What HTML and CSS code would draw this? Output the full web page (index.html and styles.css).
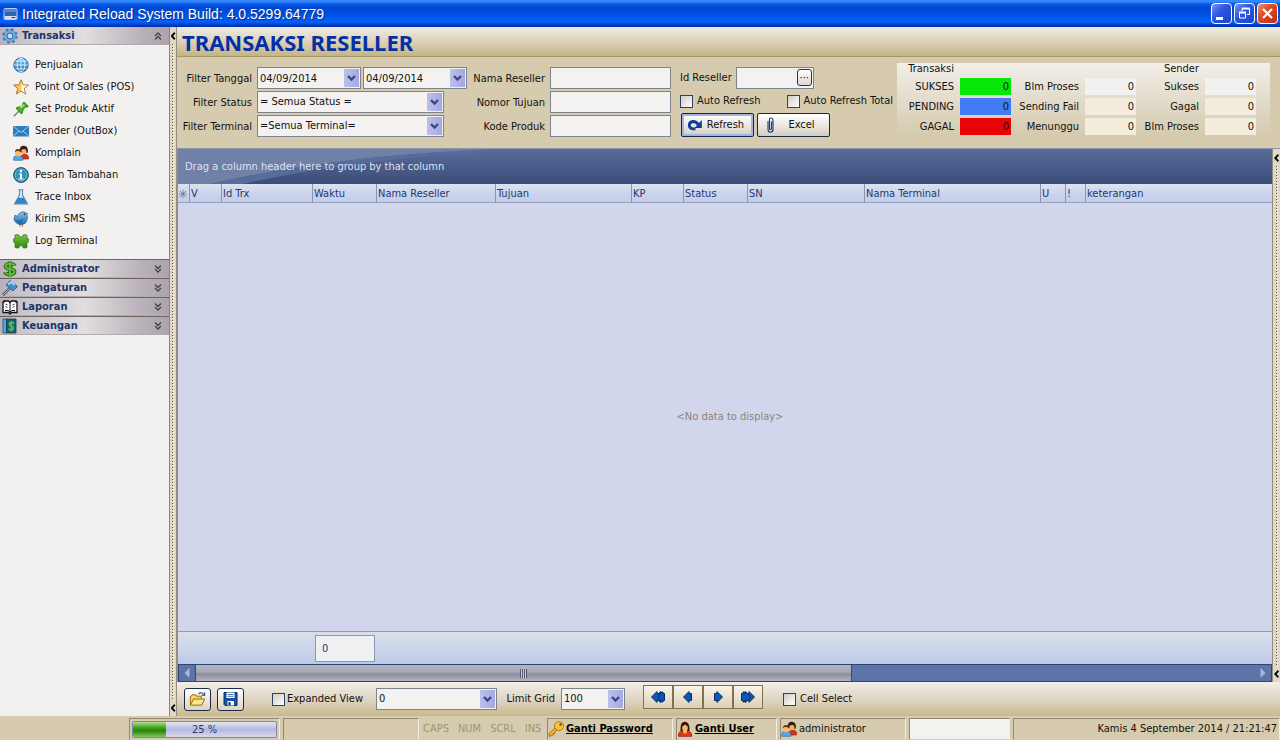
FILE: index.html
```html
<!DOCTYPE html>
<html lang="id">
<head>
<meta charset="utf-8">
<title>Integrated Reload System</title>
<link rel="stylesheet" href="styles.css">
</head>
<body>
<svg class="defs" aria-hidden="true">
  <defs>
    <linearGradient id="blue" x1="0" y1="0" x2="0" y2="1"><stop offset="0" stop-color="#8cc8f0"/><stop offset="1" stop-color="#1668a8"/></linearGradient>
    <linearGradient id="green" x1="0" y1="0" x2="0" y2="1"><stop offset="0" stop-color="#7cc83c"/><stop offset="1" stop-color="#2e8418"/></linearGradient>
    <linearGradient id="gold" x1="0" y1="0" x2="1" y2="0"><stop offset="0" stop-color="#f6b62c"/><stop offset="0.5" stop-color="#fbd050"/><stop offset="0.6" stop-color="#fffbe8"/><stop offset="1" stop-color="#fff"/></linearGradient>
    <symbol id="drop" viewBox="0 0 15 17"><path d="M4 6.500l3.500 3.500 3.500-3.500" fill="none" stroke="#3c4880" stroke-width="2.400"/></symbol>
    <symbol id="chev" viewBox="0 0 8 8"><path d="M1 .5l3 3 3-3M1 4l3 3 3-3" fill="none" stroke="#444" stroke-width="1.300"/></symbol>
    <symbol id="people" viewBox="0 0 16 16">
      <path d="M8.500 14V10.500q2.500-2 5-1 2 .6 2 2.500v2z" fill="#dc3010" stroke="#8c1c08" stroke-width=".6"/>
      <circle cx="10.800" cy="5.500" r="3.600" fill="#f0b060"/><path d="M6.800 6Q6.500.5 11 .8 15.500 1 14.800 7.500L13.400 8Q14 4 11 4 8.500 4.200 8 6z" fill="#3c1c0c"/>
      <path d="M.7 15.300v-2.400Q1 10.500 5 10.500q4.300 0 4.800 2.400v2.400z" fill="#5ca8e4" stroke="#1c5c98" stroke-width=".6"/>
      <circle cx="5.300" cy="8" r="3.200" fill="#f4bc6c"/><path d="M2 7.500Q1.800 3.800 5.300 4q3.600.1 3.400 3.500Q6 6.200 5 5.800 3 6 2 7.500z" fill="#6c300c"/>
    </symbol>
  </defs>
</svg>

<header class="titlebar">
  <svg class="app-icon" viewBox="0 0 14 12"><rect x=".5" y=".5" width="13" height="11" rx="1" fill="#2c64b4" stroke="#b8d0f4"/><path d="M1 8h12v3H1z" fill="#d8e0f0"/><path d="M1 1h12v3H1z" fill="#5484cc"/><path d="M8 9.500h4" stroke="#345"/></svg>
  <h1 class="app-name">Integrated Reload System Build: 4.0.5299.64779</h1>
  <div class="window-buttons">
    <button class="win-btn" aria-label="Minimize"><svg viewBox="0 0 19 19"><path d="M4 13h7v3H4z" fill="#fff"/></svg></button>
    <button class="win-btn" aria-label="Restore"><svg viewBox="0 0 19 19" fill="none" stroke="#fff"><path d="M7 7V4.500h7.500v6H12"/><path d="M7 4.500h7.500" stroke-width="2"/><path d="M4.500 8.500h6v5.500h-6z"/><path d="M4 8.500h7" stroke-width="2"/></svg></button>
    <button class="win-btn close" aria-label="Close"><svg viewBox="0 0 19 19"><path d="M5 5l9 9M14 5l-9 9" stroke="#fff" stroke-width="2.200"/></svg></button>
  </div>
</header>

<div class="workspace">
  <nav class="sidebar">
    <button class="nav-head">
      <svg class="icon" viewBox="0 0 16 16"><circle cx="8" cy="8" r="6.200" fill="#5c9cd8" stroke="#3c7cb8" stroke-width="3" stroke-dasharray="2.600 2.270"/><circle cx="8" cy="8" r="5.600" fill="#70ace0"/><circle cx="8" cy="8" r="3" fill="#c8d8ec" stroke="#2c64a0"/></svg>
      <span>Transaksi</span><svg class="chev up"><use href="#chev"/></svg>
    </button>
    <ul class="nav-list">
      <li><a class="nav-item" href="#"><svg class="icon" viewBox="0 0 16 16"><circle cx="8" cy="8" r="7.200" fill="url(#blue)" stroke="#2468a4"/><path d="M8 1v14M1 8h14M2.500 4.200h11M2.500 11.800h11" stroke="#d4ecfc" fill="none"/><ellipse cx="8" cy="8" rx="3.800" ry="7" fill="none" stroke="#d4ecfc"/></svg>Penjualan</a></li>
      <li><a class="nav-item" href="#"><svg class="icon" viewBox="0 0 16 16"><path d="M8 .8l2 5 5.400.3-4.200 3.500 1.500 5.400L8 12l-4.700 3 1.500-5.400L.6 6.100 6 5.800z" fill="url(#gold)" stroke="#a4702c" stroke-width=".9"/></svg>Point Of Sales (POS)</a></li>
      <li><a class="nav-item" href="#"><svg class="icon" viewBox="0 0 16 16"><path d="M.8 15.200L6 10" stroke="#78888c" stroke-width="1.600"/><path d="M3 7.200q2-1.800 4.200-1L10 3.800Q9.500 2 11 1l4.300 4.200q-1.300 1.300-3 .9L9.800 9q.5 2.500-1.400 4z" fill="#48b820" stroke="#207808" stroke-width=".9"/><path d="M7.500 7L11 3.800" stroke="#b4f080" stroke-width="1.300"/></svg>Set Produk Aktif</a></li>
      <li><a class="nav-item" href="#"><svg class="icon" viewBox="0 0 16 16"><path d="M0 3h16v10.500H0z" fill="#2c7cc0"/><path d="M.5 3.500L8 9.500l7.500-6M.5 13L6 8M15.500 13L10 8" fill="none" stroke="#a0d0f0" stroke-width="1"/></svg>Sender (OutBox)</a></li>
      <li><a class="nav-item" href="#"><svg class="icon"><use href="#people"/></svg>Komplain</a></li>
      <li><a class="nav-item" href="#"><svg class="icon" viewBox="0 0 16 16"><circle cx="8" cy="8" r="7.400" fill="#20789c" stroke="#105474"/><circle cx="8" cy="8" r="6" fill="#3094bc" stroke="#90ccdc" stroke-width=".8"/><path d="M6 6.500h3v5h1.500v1h-5v-1H7v-4H6zM7 3h2v2.300H7z" fill="#fff"/></svg>Pesan Tambahan</a></li>
      <li><a class="nav-item" href="#"><svg class="icon" viewBox="0 0 16 16"><path d="M5.500.8h5M6.500 1v5L1.500 15h13L9.500 6V1" fill="#dcecf8" stroke="#5488b4" stroke-width="1.100"/><path d="M5.200 8.800h5.600l3.200 6H2z" fill="#2c84cc"/></svg>Trace Inbox</a></li>
      <li><a class="nav-item" href="#"><svg class="icon" viewBox="0 0 16 16"><path d="M7 13v3M9.500 13v3" stroke="#e08c20"/><path d="M13.500 2l2.400.6-2.200 1.300z" fill="#e08c20"/><path d="M2 4l2.500 1.500Q6 1 10 .7q4 0 4.300 4 .3 5-1.800 7.300Q9 15 5 13 1.500 11 1 8.500z" fill="url(#blue)" stroke="#24609c" stroke-width=".7"/><path d="M3 9q4 2 7-2 0 4-3.500 5Q4 12 3 9z" fill="#2464b0"/><circle cx="11.500" cy="3.400" r=".8" fill="#123"/></svg>Kirim SMS</a></li>
      <li><a class="nav-item" href="#"><svg class="icon" viewBox="0 0 16 16"><path d="M2 2q2-1 4 0 0 2 2 2t2-2q2-1 4 0v3.500q2-.5 2 1.800T14 9.500V14.500q-2 1-4 .3Q10 12.500 8 12.500t-2 2.300q-2 .7-4-.3V9.500Q0 9.800 0 7.500T2 5.500z" fill="url(#green)" stroke="#347c18" stroke-width=".7"/></svg>Log Terminal</a></li>
    </ul>
    <button class="nav-head">
      <svg class="icon" viewBox="0 0 16 16"><path d="M12.500 5Q12 2.800 8 2.800T3.500 5.300Q3.500 7.300 8 8t4.500 2.800Q12.500 13.200 8 13.200T3.300 11M8 .5v15" fill="none" stroke="#206818" stroke-width="3.800"/><path d="M12.500 5Q12 2.800 8 2.800T3.500 5.300Q3.500 7.300 8 8t4.500 2.800Q12.500 13.200 8 13.200T3.300 11M8 1v14" fill="none" stroke="#60b838" stroke-width="2"/></svg>
      <span>Administrator</span><svg class="chev"><use href="#chev"/></svg>
    </button>
    <button class="nav-head">
      <svg class="icon" viewBox="0 0 16 16"><path d="M1 15L8 8" stroke="#585c68" stroke-width="2.600"/><path d="M1.500 14.500L8 8" stroke="#b8c0cc"/><path d="M4 5l4-4.500 7.500 6L11 11z" fill="#3c90d0" stroke="#1c588c" stroke-width=".8"/><path d="M6 4.500L9 2l3.500 3" fill="none" stroke="#c8e8fc" stroke-width="1.500"/></svg>
      <span>Pengaturan</span><svg class="chev"><use href="#chev"/></svg>
    </button>
    <button class="nav-head">
      <svg class="icon" viewBox="0 0 16 16"><path d="M1 3h1V2h4.500L8 3.500 9.500 2H14v1h1v10.500H9.500L8 15l-1.500-1.500H1z" fill="#fff" stroke="#111" stroke-width="1.300"/><path d="M8 3.500V14M3 11.500h3L8 13l2-1.500h3" stroke="#111" fill="none"/><path d="M3.500 5l2 1M3.500 7.500l2 1M12.500 5l-2 1M12.500 7.500l-2 1" stroke="#444"/></svg>
      <span>Laporan</span><svg class="chev"><use href="#chev"/></svg>
    </button>
    <button class="nav-head">
      <svg class="icon" viewBox="0 0 16 16"><path d="M1 1h3.500v14H1z" fill="#58a8d4" stroke="#185074" stroke-width=".8"/><path d="M4.500 1H14v14H4.500z" fill="#186078" stroke="#0c3c50" stroke-width=".8"/><path d="M12 5.500Q11 4 9 4.500T7.300 6.500Q8 8 9.500 8t2 2.200Q11 12 9 12t-2.300-1.500M9.300 3v10.500" fill="none" stroke="#50c840" stroke-width="1.500"/></svg>
      <span>Keuangan</span><svg class="chev"><use href="#chev"/></svg>
    </button>
  </nav>
  <div class="splitter"><span class="collapse"></span><span class="dots"></span><span class="collapse"></span></div>

  <main class="main">
    <h2 class="page-title">TRANSAKSI RESELLER</h2>

    <form class="filters">
      <div class="fields fields-a">
        <label for="date-from">Filter Tanggal</label>
        <div class="dates">
          <span class="combo"><input id="date-from" type="text" value="04/09/2014"><svg class="arrow"><use href="#drop"/></svg></span>
          <span class="combo"><input aria-label="Sampai tanggal" type="text" value="04/09/2014"><svg class="arrow"><use href="#drop"/></svg></span>
        </div>
        <label for="status">Filter Status</label>
        <span class="combo wide"><select id="status"><option>= Semua Status =</option></select><svg class="arrow"><use href="#drop"/></svg></span>
        <label for="terminal">Filter Terminal</label>
        <span class="combo wide"><select id="terminal"><option>=Semua Terminal=</option></select><svg class="arrow"><use href="#drop"/></svg></span>
      </div>
      <div class="fields fields-b">
        <label for="nama">Nama Reseller</label><input id="nama" type="text">
        <label for="tujuan">Nomor Tujuan</label><input id="tujuan" type="text">
        <label for="kode">Kode Produk</label><input id="kode" type="text">
      </div>
      <div class="actions">
        <div class="id-row"><label for="idres">Id Reseller</label><span class="lookup"><input id="idres" type="text"><button type="button" class="more" aria-label="Cari">···</button></span></div>
        <div class="checks"><label class="check"><input type="checkbox">Auto Refresh</label><label class="check"><input type="checkbox">Auto Refresh Total</label></div>
        <div class="buttons">
          <button type="button" class="btn primary"><svg viewBox="0 0 16 16"><path d="M8.500 11.800H6Q2.300 11.500 2.300 8.200T6 4.500q3.500 0 5 3" fill="none" stroke="#0c3c94" stroke-width="2.800"/><path d="M14.800 3v8H7.500z" fill="#0c3c94"/></svg><span>Refresh</span></button>
          <button type="button" class="btn"><svg viewBox="0 0 16 16"><path d="M5 4v8.500Q5 15.200 7.500 15.200T10 12.500V3Q10 1 8.200 1T6.500 3v8.500q0 1.200 1 1.200t1-1.200V4.500" fill="none" stroke="#1c3478" stroke-width="1.100"/></svg><span>Excel</span></button>
        </div>
      </div>
      <div class="totals">
        <span class="lab">Transaksi</span><span></span><span></span><span></span><span class="lab">Sender</span><span></span>
        <span class="lab">SUKSES</span><output class="val green">0</output><span class="lab">Blm Proses</span><output class="val white">0</output><span class="lab">Sukses</span><output class="val white">0</output>
        <span class="lab">PENDING</span><output class="val blue">0</output><span class="lab">Sending Fail</span><output class="val">0</output><span class="lab">Gagal</span><output class="val">0</output>
        <span class="lab">GAGAL</span><output class="val red">0</output><span class="lab">Menunggu</span><output class="val">0</output><span class="lab">Blm Proses</span><output class="val">0</output>
      </div>
    </form>

    <div class="content">
      <section class="grid">
        <div class="group-bar">
          <svg class="swoosh" viewBox="0 0 1094 35" preserveAspectRatio="none"><path d="M0 0H320Q160 6 32 35H0z" fill="#7080a6"/><path d="M320 0Q160 6 32 35H65Q180 8 360 0z" fill="#586c9c"/></svg>
          <span class="group-hint">Drag a column header here to group by that column</span>
        </div>
        <div class="table-wrap">
          <table class="data">
            <colgroup><col class="w12"><col class="w32"><col class="w91"><col class="w64"><col class="w119"><col class="w136"><col class="w52"><col class="w64"><col class="w117"><col class="w176"><col class="w25"><col class="w20"><col></colgroup>
            <thead><tr><th class="star"><svg viewBox="0 0 8 8"><path d="M4 0v8M0 4h8M1 1l6 6M7 1L1 7" stroke="#505870" stroke-width=".9" stroke-dasharray="1.200 .6"/></svg></th><th>V</th><th>Id Trx</th><th>Waktu</th><th>Nama Reseller</th><th>Tujuan</th><th>KP</th><th>Status</th><th>SN</th><th>Nama Terminal</th><th>U</th><th>!</th><th>keterangan</th></tr></thead>
            <tbody><tr><td colspan="13">&lt;No data to display&gt;</td></tr></tbody>
            <tfoot><tr><td colspan="3"></td><td class="sum"><div class="sum-box">0</div></td><td colspan="9"></td></tr></tfoot>
          </table>
        </div>
        <div class="scrollbar">
          <button class="sb-btn" aria-label="Geser kiri"><svg viewBox="0 0 6 10"><path d="M5.500 0v10L.5 5z" fill="#a8b8dc"/></svg></button>
          <div class="sb-track"><div class="sb-thumb"><span class="grip"></span></div></div>
          <button class="sb-btn right" aria-label="Geser kanan"><svg viewBox="0 0 6 10"><path d="M.5 0v10l5-5z" fill="#a8b8dc"/></svg></button>
        </div>
      </section>
      <div class="splitter"><span class="collapse"></span><span class="dots"></span><span class="collapse"></span></div>
    </div>

    <div class="toolbar">
      <div class="files">
        <button class="tool" aria-label="Buka"><svg viewBox="0 0 18 16"><path d="M1.500 14V5h1l1-1.500h3.500L8 5h5v3" fill="#f4d870" stroke="#94640c"/><path d="M1.500 14.500L4.800 8H16.500l-3 6.500z" fill="#fce880" stroke="#94640c"/><path d="M10 2.500q3-2.500 5.500.5M16.500 1v3h-3" fill="none" stroke="#1c3478" stroke-width="1.100"/></svg></button>
        <button class="tool" aria-label="Simpan"><svg viewBox="0 0 16 16"><path d="M1.500 1.500h13v13h-12l-1-1z" fill="#1454a8" stroke="#0c2c6c"/><path d="M4 1.500h8v5.500H4zM5 10h6.500v4.500H5z" fill="#fff"/><path d="M5 3.500h6M5 5.300h6" stroke="#1454a8" stroke-width=".8"/><path d="M6 11h2v3.500H6z" fill="#0c2c6c"/></svg></button>
      </div>
      <label class="check tight"><input type="checkbox">Expanded View</label>
      <span class="combo view"><select aria-label="View"><option>0</option></select><svg class="arrow"><use href="#drop"/></svg></span>
      <label class="limit" for="limit">Limit Grid</label>
      <span class="combo count"><select id="limit"><option>100</option></select><svg class="arrow"><use href="#drop"/></svg></span>
      <div class="pager">
        <button class="page" aria-label="Pertama"><svg viewBox="0 0 16 16" fill="#0858b4" stroke="#0c2c6c"><path d="M10.500 2.500v2h1v-1.500h1.500v1.500h1.500v7H13V13h-1.500v-1.500h-1v2L5 8z"/><path d="M7 2.500L1.500 8 7 13.500v-2h2v-7H7z"/></svg></button>
        <button class="page" aria-label="Sebelumnya"><svg viewBox="0 0 16 16" fill="#0858b4" stroke="#0c2c6c"><path d="M9 2.500v2h2.500v7H9v2L3.500 8z"/></svg></button>
        <button class="page" aria-label="Berikutnya"><svg viewBox="0 0 16 16" fill="#0858b4" stroke="#0c2c6c"><path d="M7 2.500v2H4.500v7H7v2L12.500 8z"/></svg></button>
        <button class="page" aria-label="Terakhir"><svg viewBox="0 0 16 16" fill="#0858b4" stroke="#0c2c6c"><path d="M9 2.500L14.500 8 9 13.500v-2H7v-7h2z"/><path d="M5.500 2.500v2h-1v-1.500H3v1.500H1.500v7H3V13h1.500v-1.500h1v2L11 8z"/></svg></button>
      </div>
      <label class="check"><input type="checkbox">Cell Select</label>
    </div>
  </main>
</div>

<footer class="statusbar">
  <div class="cell c-progress"><div class="progress" role="progressbar" aria-valuenow="25"><div class="bar" style="width:23%"></div><span class="pct">25 %</span></div></div>
  <div class="cell c-blank"></div>
  <div class="keys"><span>CAPS</span><span>NUM</span><span>SCRL</span><span>INS</span></div>
  <div class="cell c-pass"><svg class="icon" viewBox="0 0 16 16"><path d="M1 15.200v-2.500L8 6l2 2-3 3v1.500H5.500V14H4l-1 1.200z" fill="#f0b020" stroke="#98640c" stroke-width=".8"/><circle cx="11" cy="5" r="4.500" fill="#f8c43c" stroke="#a46c10" stroke-width=".8"/><circle cx="12.500" cy="3.500" r="1.200" fill="#6c4808"/></svg><a href="#">Ganti Password</a></div>
  <div class="cell c-user"><svg class="icon" viewBox="0 0 16 16"><path d="M1.500 15.300Q1 10.500 5 10.500h6q4 0 3.500 4.800z" fill="#e43818" stroke="#901808" stroke-width=".8"/><path d="M3.500 10Q3 .5 8 .7T12.500 10z" fill="#3c1008"/><ellipse cx="8" cy="7" rx="2.800" ry="3.600" fill="#f4b870"/><path d="M6 10h4v1L8 13l-2-2z" fill="#f4b870"/><path d="M5 5Q7 5 8.500 3 9.500 5 11 5.500 11 2 8 2T5 5z" fill="#3c1008"/></svg><a href="#">Ganti User</a></div>
  <div class="cell c-admin"><svg class="icon"><use href="#people"/></svg><span>administrator</span></div>
  <div class="cell c-white"></div>
  <div class="cell c-time">Kamis 4 September 2014 / 21:21:47</div>
</footer>
</body>
</html>
```
FILE: styles.css
```css
* { box-sizing: border-box; }
body {
  margin: 0;
  height: 100vh;
  display: flex;
  flex-direction: column;
  background: #d6cbae;
  color: #111;
  font: 11px/14px "DejaVu Sans Condensed", "DejaVu Sans", sans-serif;
  white-space: nowrap;
  overflow: hidden;
}
input, select, button { font: inherit; color: inherit; margin: 0; padding: 0; border-radius: 0; }
svg { display: block; flex: none; }
.defs { position: absolute; width: 0; height: 0; }
.icon { width: 16px; height: 16px; }

/* Window title */
.titlebar {
  height: 27px;
  flex: none;
  display: flex;
  align-items: center;
  padding: 0 2px 0 3px;
  background: linear-gradient(#2a80f8 0, #4090ff 1px, #0a5ae8 4px, #0048d0 8px, #0054e8 16px, #0660fc 22px, #0448d8 24px, #002ca0 27px);
}
.app-icon { width: 15px; height: 12px; }
.app-name {
  flex: 1;
  margin: 0 0 0 4px;
  color: #fff;
  font: 14px/16px "Liberation Sans", Arial, sans-serif;
  text-shadow: 1px 1px 1px #0c2c80;
}
.window-buttons { display: flex; gap: 2px; }
.win-btn { width: 21px; height: 21px; border: 1px solid #fff; border-radius: 4px; background: linear-gradient(135deg, #7c94f4, #3058e0 40%, #1c44c8); }
.win-btn svg { width: 19px; height: 19px; }
.win-btn.close { background: linear-gradient(135deg, #f09070, #dc4c24 40%, #bc3010); }

.workspace { flex: 1; min-height: 0; display: flex; }

/* Navigation */
.sidebar { width: 170px; flex: none; background: #f3f1ef; border-right: 1px solid #8c8478; }
.nav-head {
  width: 100%;
  height: 19px;
  display: flex;
  align-items: center;
  gap: 4px;
  padding: 0 7px 0 2px;
  border: 0;
  border-top: 1px solid #70645c;
  border-bottom: 1px solid #b4acac;
  background: linear-gradient(90deg, #b8b0bc 0, #c8c4cc 12%, #e0dee0 50%, #b8b0b8 85%, #aca4ac);
  color: #1c3468;
  font: bold 11px/14px "DejaVu Sans Condensed", Verdana, sans-serif;
}
.nav-head span { flex: 1; text-align: left; }
.nav-head:first-child { height: 18px; border-top: 0; }
.chev { width: 8px; height: 8px; }
.chev.up { transform: rotate(180deg); }
.nav-list { list-style: none; margin: 0; padding: 9px 0 7px; }
.nav-item { height: 22px; display: flex; align-items: center; gap: 6px; padding-left: 13px; color: #111; text-decoration: none; }

.splitter { width: 7px; flex: none; display: flex; flex-direction: column; align-items: center; background: #e0d8c4; border-right: 1px solid #948c80; padding: 5px 0 4px; gap: 4px; }
.collapse { width: 5px; height: 8px; background: #000; clip-path: polygon(75% 0, 100% 20%, 50% 50%, 100% 80%, 75% 100%, 0 50%); }
.dots { flex: 1; width: 4px; background: repeating-linear-gradient(#585040 0, #585040 1px, transparent 1px, transparent 3px) 1px 0 / 1px 100% no-repeat, repeating-linear-gradient(transparent 0, transparent 1px, #fff 1px, #fff 2px, transparent 2px, transparent 3px) 2px 0 / 1px 100% no-repeat; }

.main { flex: 1; min-width: 0; display: flex; flex-direction: column; }
.page-title {
  flex: none;
  margin: 0;
  height: 30px;
  padding-left: 5px;
  border-bottom: 1px solid #a89868;
  background: linear-gradient(#f0ece2, #dcd2bc 50%, #c4b484);
  color: #0430a4;
  font: bold 22px/30px "Noto Sans", Tahoma, sans-serif;
}

/* Filters */
.filters { flex: none; height: 91px; display: flex; align-items: flex-start; padding: 6px 10px 0 0; }
.fields { display: grid; grid-auto-rows: 22px; row-gap: 2px; column-gap: 5px; align-items: center; padding-top: 4px; }
.fields > label { text-align: right; padding-top: 2px; }
.fields-a { grid-template-columns: 75px 210px; }
.fields-b { grid-template-columns: 78px 121px; }
.dates { display: flex; gap: 2px; }
input[type="text"], select { width: 100%; height: 22px; border: 1px solid #7c8490; background: #f3f2f0; padding: 0 2px; appearance: none; outline: 0; }
.combo { position: relative; display: block; width: 104px; }
.combo.wide { width: 187px; }
.arrow { position: absolute; top: 2px; right: 2px; width: 15px; height: 18px; background: linear-gradient(90deg, #bcc0ec, #a4a8e0); pointer-events: none; }
.actions { width: 226px; padding: 4px 0 0 9px; display: flex; flex-direction: column; gap: 5px; }
.id-row { display: flex; align-items: center; gap: 4px; }
.lookup { position: relative; display: block; width: 78px; }
.more { position: absolute; right: 2px; top: 2px; width: 15px; height: 17px; border: 1px solid #28344c; border-radius: 3px; background: linear-gradient(#fff, #ddd8d0); line-height: 12px; }
.checks { display: flex; justify-content: space-between; padding-right: 4px; }
.check { display: flex; align-items: center; gap: 4px; }
.check.tight { gap: 2px; }
.check input { appearance: none; width: 13px; height: 13px; border: 1px solid #2c4464; background: linear-gradient(135deg, #d0ccc4, #fff); }
.buttons { display: flex; gap: 3px; padding-left: 1px; }
.btn { width: 73px; height: 24px; display: flex; align-items: center; padding: 0 5px; border: 1px solid #10284c; border-radius: 2px; background: linear-gradient(#fff, #e8e4dc 60%, #d4ccbc); }
.btn svg { width: 16px; height: 16px; }
.btn span { flex: 1; text-align: center; }
.btn.primary { box-shadow: inset 0 0 0 2px #a4b4e0; }
.totals {
  margin-left: auto;
  display: grid;
  grid-template-columns: 57px 51px 62px 51px 57px 51px;
  grid-template-rows: 12px repeat(3, 17px);
  column-gap: 6px;
  row-gap: 3px;
  padding: 0 14px 2px 0;
  background: linear-gradient(#f2efe8, #e0d8c6 60%, #d4c9ac);
}
.lab { display: flex; align-items: center; justify-content: flex-end; }
.val { padding-right: 2px; line-height: 17px; text-align: right; background: #f3ebdb; }
.white { background: #f2f1f0; }
.green { background: #08e808; }
.blue { background: #407cf4; }
.red { background: #e80404; }

/* Data grid */
.content { flex: 1; min-height: 0; display: flex; border-top: 1px solid #8c94a8; }
.grid { flex: 1; min-width: 0; display: flex; flex-direction: column; border-left: 1px solid #8890a8; background: #d1d6ed; }
.content .splitter { border-left: 1px solid #948c80; border-right: 0; width: 8px; }
.group-bar { position: relative; flex: none; height: 35px; display: flex; align-items: center; padding-left: 7px; background: linear-gradient(#586c9c, #3c4c78); color: #dde3f0; }
.swoosh { position: absolute; inset: 0; width: 100%; height: 100%; }
.group-hint { position: relative; }
.table-wrap { flex: 1; min-height: 0; }
.data { width: 100%; height: 100%; table-layout: fixed; border-collapse: separate; border-spacing: 0; color: #24386c; }
.data th { height: 19px; padding: 1px 1px 0; text-align: left; font-weight: normal; border-right: 1px solid #8894b4; border-bottom: 1px solid #94a0bc; background: linear-gradient(#dde2f0, #ccd5ee 50%, #c2cde8); }
.data th:last-child { border-right: 0; }
.star svg { width: 8px; height: 8px; }
.data td { padding: 0; }
.data tbody td { text-align: center; color: #8c8478; padding-left: 10px; }
.data tfoot td { height: 33px; border-top: 1px solid #8c98b8; background: linear-gradient(#dbdfea, #ccd5ec 50%, #bccae4); }
.data .sum { padding: 0 2px; }
.sum-box { height: 27px; border: 1px solid #8c98ac; background: #eff0f2; padding-left: 6px; line-height: 26px; }
.w12 { width: 12px; } .w20 { width: 20px; } .w25 { width: 25px; } .w32 { width: 32px; } .w52 { width: 52px; } .w64 { width: 64px; } .w91 { width: 91px; } .w117 { width: 117px; } .w119 { width: 119px; } .w136 { width: 136px; } .w176 { width: 176px; }
.scrollbar { flex: none; height: 18px; display: flex; border: 1px solid #2c4478; background: #5c74a8; }
.sb-btn { width: 16px; border: 0; background: none; display: flex; align-items: center; justify-content: center; }
.sb-btn svg { width: 6px; height: 10px; }
.sb-track { flex: 1; display: flex; }
.sb-thumb { width: 62%; border: solid #34487c; border-width: 0 1px; background: linear-gradient(#b4b6c0, #a8a8b4 45%, #8c8c9c 55%, #b0b0bc); display: flex; align-items: center; justify-content: center; }
.grip { width: 7px; height: 9px; background: repeating-linear-gradient(90deg, #505870 0, #505870 1px, #c8ccd4 1px, #c8ccd4 2px); }

/* Bottom toolbar */
.toolbar { flex: none; height: 34px; display: flex; align-items: center; padding-left: 7px; background: linear-gradient(#f2efe9, #ddd4c0 55%, #c8b98c); }
.files { display: flex; gap: 6px; margin-right: 28px; }
.tool { width: 27px; height: 23px; display: flex; align-items: center; justify-content: center; border: 1px solid #1c2c48; border-radius: 3px; background: linear-gradient(#fff, #ddd4c0); }
.tool svg { width: 17px; height: 16px; }
.check.tight { width: 104px; }
.view { width: 121px; }
.limit { width: 64px; text-align: right; padding-right: 6px; }
.count { width: 64px; }
.pager { display: flex; margin: 0 20px 4px 18px; }
.page { width: 30px; height: 24px; display: flex; align-items: center; justify-content: center; border: 1px solid #847050; background: linear-gradient(#f8f4ec, #dcd0b4); }
.page svg { width: 16px; height: 16px; }

/* Status bar */
.statusbar { flex: none; height: 24px; display: flex; gap: 3px; padding: 2px 0 0 129px; background: #d6cbae; }
.cell { display: flex; align-items: center; gap: 2px; border: 1px solid; border-color: #948870 #f4eee0 #d6cbae #948870; }
.c-progress { width: 151px; padding: 0 2px; }
.progress { position: relative; flex: 1; height: 17px; border: 1px solid #7c88a8; border-radius: 2px; background: linear-gradient(#e4e6f4, #b4b8dc 50%, #d8daf0); }
.bar { height: 100%; background: linear-gradient(#b0dc98, #38a010 40%, #2c8408 60%, #80c860); }
.pct { position: absolute; inset: 0; text-align: center; line-height: 15px; color: #24386c; }
.c-blank { width: 136px; }
.keys { width: 122px; display: flex; align-items: center; gap: 9px; padding-left: 1px; color: #9c947c; }
.c-pass { width: 126px; }
.c-user { width: 101px; }
.c-pass a, .c-user a { color: #000; font-weight: bold; text-decoration: underline; }
.c-admin { width: 126px; }
.c-white { width: 101px; background: #f3f2ef; }
.c-time { flex: 1; justify-content: flex-end; padding-right: 2px; }
```
